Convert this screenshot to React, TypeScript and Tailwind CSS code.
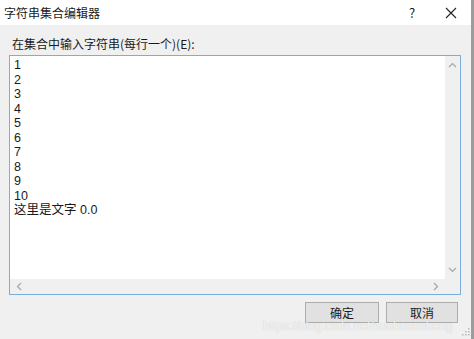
import React from "react";

const font = { fontFamily: '"Noto Sans CJK SC", "Noto Sans", sans-serif' };
const lineFont = { fontFamily: '"Liberation Sans", "Noto Sans CJK SC", sans-serif' };

export default function App() {
  const lines = ["1", "2", "3", "4", "5", "6", "7", "8", "9", "10", "这里是文字 0.0"];
  return (
    <div
      className="relative w-[474px] h-[339px] bg-[#f0f0f0] text-[12px] text-[#1a1a1a] flex flex-col overflow-hidden"
      style={font}
    >
      <div className="absolute right-0 top-0 h-full w-[3px] bg-[#9c9c9c]" />
      {/* title bar */}
      <div className="h-[25px] bg-white flex items-center pl-[4px] pr-[3px] shrink-0">
        <span className="leading-none">字符串集合编辑器</span>
        <div className="flex-1" />
        <span className="w-[14px] text-center text-[13px] leading-none mr-[26px]">?</span>
        <svg width="12" height="12" viewBox="0 0 12 12" className="mr-[14px]">
          <path d="M1 1 L11 11 M11 1 L1 11" stroke="#222" strokeWidth="1.1" />
        </svg>
      </div>
      {/* label */}
      <div className="pl-[12px] h-[30px] flex items-center pt-[8px] leading-none">
        在集合中输入字符串(每行一个)(E):
      </div>
      {/* text box */}
      <div className="ml-[9px] w-[452px] h-[240px] border border-[#7aaedb] bg-white flex flex-col">
        <div className="flex flex-1 min-h-0">
          <div className="flex-1 pl-[4px] pt-[2px] text-[12.5px]" style={lineFont}>
            {lines.map((l) => (
              <div key={l} className="h-[14.5px] leading-[14.5px]">{l}</div>
            ))}
          </div>
          <div className="w-[15px] bg-[#f0f0f0] flex flex-col items-center justify-between py-[6px]">
            <svg width="9" height="6" viewBox="0 0 9 6">
              <path d="M1 5 L4.5 1.5 L8 5" stroke="#a6a6a6" strokeWidth="1.2" fill="none" />
            </svg>
            <svg width="9" height="6" viewBox="0 0 9 6">
              <path d="M1 1 L4.5 4.5 L8 1" stroke="#a6a6a6" strokeWidth="1.2" fill="none" />
            </svg>
          </div>
        </div>
        <div className="h-[15px] flex">
          <div className="flex-1 bg-[#f0f0f0] flex items-center justify-between px-[6px]">
            <svg width="6" height="9" viewBox="0 0 6 9">
              <path d="M5 1 L1.5 4.5 L5 8" stroke="#a6a6a6" strokeWidth="1.2" fill="none" />
            </svg>
            <svg width="6" height="9" viewBox="0 0 6 9">
              <path d="M1 1 L4.5 4.5 L1 8" stroke="#a6a6a6" strokeWidth="1.2" fill="none" />
            </svg>
          </div>
          <div className="w-[15px] bg-[#f0f0f0]" />
        </div>
      </div>
      {/* buttons */}
      <div className="flex justify-end gap-[7px] pr-[16px] mt-[7px]">
        <button className="w-[74px] h-[21px] bg-[#e1e1e1] border border-[#adadad] flex items-center justify-center leading-none">
          确定
        </button>
        <button className="w-[72px] h-[21px] bg-[#e1e1e1] border border-[#adadad] flex items-center justify-center leading-none">
          取消
        </button>
      </div>
      {/* watermark */}
      <div
        className="absolute left-[263px] top-[320px] text-[12px] leading-none text-white/80 whitespace-nowrap"
        style={{ fontFamily: '"Liberation Sans", sans-serif', textShadow: "0 0 1px rgba(120,120,120,0.45)" }}
      >
        https://blog.csdn.net/sunhuansheng
      </div>
      {/* resize grip */}
      <svg className="absolute right-[4px] bottom-[3px]" width="8" height="8" viewBox="0 0 8 8">
        <rect x="6" y="0" width="1.5" height="1.5" fill="#b8b8b8" />
        <rect x="3" y="3" width="1.5" height="1.5" fill="#b8b8b8" />
        <rect x="6" y="3" width="1.5" height="1.5" fill="#b8b8b8" />
        <rect x="0" y="6" width="1.5" height="1.5" fill="#b8b8b8" />
        <rect x="3" y="6" width="1.5" height="1.5" fill="#b8b8b8" />
        <rect x="6" y="6" width="1.5" height="1.5" fill="#b8b8b8" />
      </svg>
    </div>
  );
}
